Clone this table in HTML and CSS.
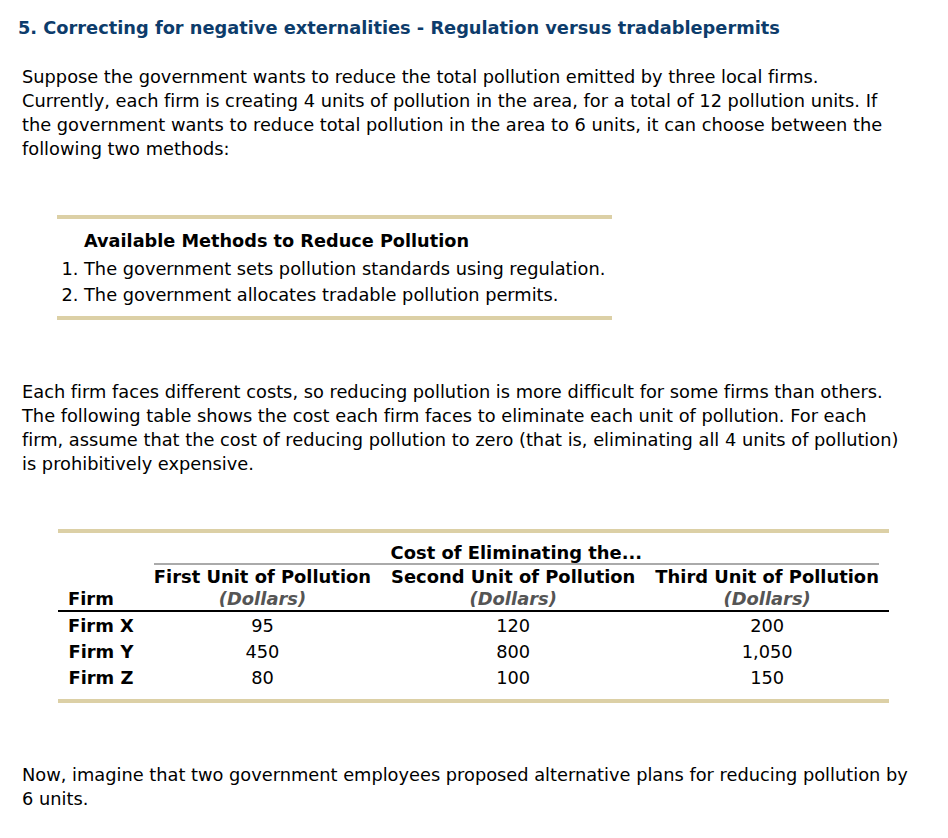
FILE: index.html
```html
<!DOCTYPE html>
<html lang="en">
<head>
<meta charset="utf-8">
<title>Correcting for negative externalities</title>
<link rel="stylesheet" href="styles.css">
</head>
<body>
<div class="page">
  <h2 class="title">5. Correcting for negative externalities - Regulation versus tradablepermits</h2>
  <p class="para first">Suppose the government wants to reduce the total pollution emitted by three local firms.<br>Currently, each firm is creating 4 units of pollution in the area, for a total of 12 pollution units. If the government wants to reduce total pollution in the area to 6 units, it can choose between the following two methods:</p>

  <div class="methods">
    <div class="methods-head">Available Methods to Reduce Pollution</div>
    <ol class="methods-list">
      <li>The government sets pollution standards using regulation.</li>
      <li>The government allocates tradable pollution permits.</li>
    </ol>
  </div>

  <p class="para second">Each firm faces different costs, so reducing pollution is more difficult for some firms than others. The following table shows the cost each firm faces to eliminate each unit of pollution. For each firm, assume that the cost of reducing pollution to zero (that is, eliminating all 4 units of pollution) is prohibitively expensive.</p>

  <table class="costs">
    <thead>
      <tr class="row-group">
        <th class="blank"></th>
        <th colspan="3" class="group"><div class="group-label">Cost of Eliminating the...</div></th>
      </tr>
      <tr class="row-cols">
        <th class="firm-head">Firm</th>
        <th>First Unit of Pollution<br><em>(Dollars)</em></th>
        <th>Second Unit of Pollution<br><em>(Dollars)</em></th>
        <th>Third Unit of Pollution<br><em>(Dollars)</em></th>
      </tr>
    </thead>
    <tbody>
      <tr class="first-row"><th>Firm X</th><td>95</td><td>120</td><td>200</td></tr>
      <tr><th>Firm Y</th><td>450</td><td>800</td><td>1,050</td></tr>
      <tr class="last-row"><th>Firm Z</th><td>80</td><td>100</td><td>150</td></tr>
    </tbody>
  </table>

  <p class="para last">Now, imagine that two government employees proposed alternative plans for reducing pollution by 6 units.</p>
</div>
</body>
</html>
```

FILE: styles.css
```css
html, body {
  margin: 0;
  padding: 0;
  background: #ffffff;
}

body {
  font-family: "DejaVu Sans", Verdana, sans-serif;
  font-size: 17.8px;
  line-height: 24px;
  color: #000000;
  font-variant-ligatures: none;
}

.page {
  width: 889px;
  padding: 16px 0 0 22px;
}

.title {
  margin: 0 0 25px -4px;
  font-size: 17.8px;
  line-height: 24px;
  font-weight: bold;
  color: #0d3c6b;
}

.para {
  margin: 0;
}

.methods {
  width: 555px;
  margin: 54px 0 0 35px;
  border-top: 4px solid #dcd0a6;
  border-bottom: 4px solid #dcd0a6;
  padding: 10px 0 8px 0;
  box-sizing: border-box;
}

.methods-head {
  font-weight: bold;
  font-size: 17.7px;
  padding-left: 27px;
  line-height: 24px;
}

.methods-list {
  margin: 3px 0 0 0;
  padding-left: 27px;
}

.methods-list li {
  line-height: 26px;
}

.second {
  margin-top: 60px;
}

.costs {
  margin: 53px 0 0 36px;
  border-collapse: collapse;
  border-top: 4px solid #dcd0a6;
  border-bottom: 4px solid #dcd0a6;
}

.costs th,
.costs td {
  padding: 0 10px;
  text-align: center;
}

.costs th {
  font-size: 17.9px;
}

.costs thead th {
  font-weight: bold;
  line-height: 22px;
  vertical-align: bottom;
}

.costs thead em {
  font-style: italic;
  color: #555555;
}

.row-group th {
  padding-top: 10px;
}

.group-label {
  line-height: 20px;
  border-bottom: 2px solid #aaaaaa;
}

.row-cols th {
  padding-top: 1px;
  border-bottom: 2px solid #000000;
}

.costs th.firm-head {
  text-align: left;
}

.costs tbody th {
  font-weight: bold;
}

.costs tbody th,
.costs tbody td {
  line-height: 26px;
}

.costs tbody .first-row th,
.costs tbody .first-row td {
  padding-top: 1px;
}

.costs tbody .last-row th,
.costs tbody .last-row td {
  padding-bottom: 8px;
}

.last {
  margin-top: 60px;
}
```
